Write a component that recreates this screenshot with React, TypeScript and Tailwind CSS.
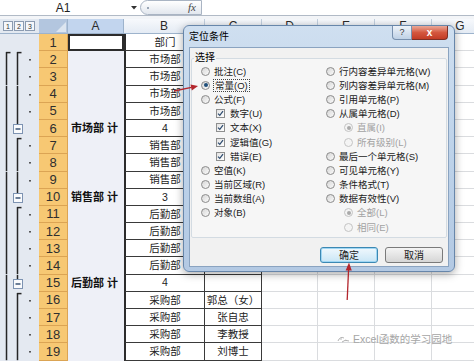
import React from 'react';

type Outline = 'none' | 'dot' | 'minus';

interface SheetRow {
  n: number;
  a?: string;
  b?: string;
  c?: string;
  o: Outline;
  start?: boolean;
}

const rows: SheetRow[] = [
  { n: 1, b: '部门', o: 'none' },
  { n: 2, b: '市场部', o: 'dot', start: true },
  { n: 3, b: '市场部', o: 'dot' },
  { n: 4, b: '市场部', o: 'dot' },
  { n: 5, b: '市场部', o: 'dot' },
  { n: 6, a: '市场部 计', b: '4', o: 'minus' },
  { n: 7, b: '销售部', o: 'dot', start: true },
  { n: 8, b: '销售部', o: 'dot' },
  { n: 9, b: '销售部', o: 'dot' },
  { n: 10, a: '销售部 计', b: '3', o: 'minus' },
  { n: 11, b: '后勤部', o: 'dot', start: true },
  { n: 12, b: '后勤部', o: 'dot' },
  { n: 13, b: '后勤部', o: 'dot' },
  { n: 14, b: '后勤部', o: 'dot' },
  { n: 15, a: '后勤部 计', b: '4', o: 'minus' },
  { n: 16, b: '采购部', c: '郭总（女）', o: 'dot', start: true },
  { n: 17, b: '采购部', c: '张自忠', o: 'dot' },
  { n: 18, b: '采购部', c: '李教授', o: 'dot' },
  { n: 19, b: '采购部', c: '刘博士', o: 'dot' },
];

const cols = [
  { id: 'D', w: 'w-[56px]' },
  { id: 'E', w: 'w-[57px]' },
  { id: 'F', w: 'w-[57px]' },
  { id: 'G', w: 'w-[57px]' },
];

function OutlineMarks({ row }: { row: SheetRow }) {
  if (row.o === 'none') return null;
  const ink = '#262626';
  return (
    <svg width="39" height="17.2" viewBox="0 0 39 17.2" className="block">
      <line x1="6.5" y1={row.n === 2 ? 1 : 0} x2="6.5" y2="17.2" stroke={ink} strokeWidth="1.5" />
      {row.n === 2 && <line x1="6" y1="1.6" x2="10.5" y2="1.6" stroke={ink} strokeWidth="1.5" />}
      {row.o === 'dot' && (
        <>
          <line x1="17.5" y1={row.start ? 1 : 0} x2="17.5" y2="17.2" stroke={ink} strokeWidth="1.5" />
          {row.start && <line x1="17" y1="1.6" x2="21.5" y2="1.6" stroke={ink} strokeWidth="1.5" />}
          <rect x="29.2" y="8" width="1.6" height="1.6" fill="#333" />
        </>
      )}
      {row.o === 'minus' && (
        <>
          <line x1="17.5" y1="0" x2="17.5" y2="4.5" stroke={ink} strokeWidth="1.5" />
          <rect x="13.5" y="4.5" width="9" height="9" fill="#fafbfd" stroke="#7d93b2" />
          <line x1="15.5" y1="9" x2="20.5" y2="9" stroke="#1e3a63" strokeWidth="1.3" />
        </>
      )}
    </svg>
  );
}

function Radio({ on, off }: { on?: boolean; off?: boolean }) {
  return (
    <span
      className={`w-[9px] h-[9px] rounded-full border flex items-center justify-center shrink-0 ${
        off ? 'border-[#c4c4c4] bg-[#f4f4f4]' : 'border-[#8b8b8b] bg-gradient-to-br from-[#d6d6d6] to-[#fbfbfb]'
      }`}
    >
      {on && <span className={`w-[4px] h-[4px] rounded-full ${off ? 'bg-[#a9a9a9]' : 'bg-[#1f4f7a]'}`} />}
    </span>
  );
}

function Check() {
  return (
    <span className="w-[9px] h-[9px] border border-[#8e8f8f] bg-gradient-to-br from-[#e3e3e3] to-white flex items-center justify-center shrink-0">
      <svg width="7" height="7" viewBox="0 0 7 7">
        <path d="M1 3.6 L2.8 5.4 L6 1.2" fill="none" stroke="#2c4a6e" strokeWidth="1.2" />
      </svg>
    </span>
  );
}

interface Opt {
  label: string;
  kind: 'radio' | 'check';
  on?: boolean;
  off?: boolean;
  indent?: boolean;
  focus?: boolean;
}

const leftOpts: Opt[] = [
  { label: '批注(C)', kind: 'radio' },
  { label: '常量(O)', kind: 'radio', on: true, focus: true },
  { label: '公式(F)', kind: 'radio' },
  { label: '数字(U)', kind: 'check', indent: true },
  { label: '文本(X)', kind: 'check', indent: true },
  { label: '逻辑值(G)', kind: 'check', indent: true },
  { label: '错误(E)', kind: 'check', indent: true },
  { label: '空值(K)', kind: 'radio' },
  { label: '当前区域(R)', kind: 'radio' },
  { label: '当前数组(A)', kind: 'radio' },
  { label: '对象(B)', kind: 'radio' },
];

const rightOpts: Opt[] = [
  { label: '行内容差异单元格(W)', kind: 'radio' },
  { label: '列内容差异单元格(M)', kind: 'radio' },
  { label: '引用单元格(P)', kind: 'radio' },
  { label: '从属单元格(D)', kind: 'radio' },
  { label: '直属(I)', kind: 'radio', on: true, off: true, indent: true },
  { label: '所有级别(L)', kind: 'radio', off: true, indent: true },
  { label: '最后一个单元格(S)', kind: 'radio' },
  { label: '可见单元格(Y)', kind: 'radio' },
  { label: '条件格式(T)', kind: 'radio' },
  { label: '数据有效性(V)', kind: 'radio' },
  { label: '全部(L)', kind: 'radio', on: true, off: true, indent: true },
  { label: '相同(E)', kind: 'radio', off: true, indent: true },
];

function OptionRow({ opt, sub }: { opt: Opt; sub: string }) {
  return (
    <div className={`h-[14.2px] flex items-center ${opt.indent ? sub : ''} ${opt.kind === 'check' ? 'gap-[5px]' : 'gap-[4px]'}`}>
      {opt.kind === 'check' ? <Check /> : <Radio on={opt.on} off={opt.off} />}
      <span
        className={`leading-[11px] whitespace-nowrap ${opt.off ? 'text-[#a2a2a2]' : 'text-[#1b1b1b]'} ${
          opt.focus ? 'outline outline-1 outline-dotted outline-[#444] outline-offset-0 px-[1px]' : ''
        }`}
      >
        {opt.label}
      </span>
    </div>
  );
}

function GoToDialog() {
  return (
    <div className="absolute left-[183px] top-[25px] w-[272px] h-[247px] rounded-[6px] border border-[#6786aa] bg-gradient-to-b from-[#cfdff0] via-[#bed3ea] to-[#b3c9e3] shadow-[0_2px_8px_rgba(0,0,0,0.35)] flex flex-col">
      <div className="h-[21px] flex items-start justify-between">
        <span className="pl-[5px] pt-[5px] text-[10px] leading-[11px] text-black">定位条件</span>
        <div className="flex mr-[6px]">
          <span className="w-[20px] h-[14px] rounded-bl-[4px] border border-t-0 border-[#7890ae] bg-gradient-to-b from-[#eef3f9] to-[#bfd1e6] flex items-center justify-center text-[9px] text-[#3a3a3a] font-['Liberation_Sans',sans-serif]">
            ?
          </span>
          <span className="w-[36px] h-[14px] rounded-br-[4px] border border-t-0 border-l-0 border-[#7d2f25] bg-gradient-to-b from-[#e9a898] via-[#d4573f] to-[#c23b25] flex items-center justify-center text-[10px] font-bold text-white font-['Liberation_Sans',sans-serif]">
            x
          </span>
        </div>
      </div>
      <div className="mx-[5px] mb-[4px] flex-1 border border-[#8aa3c0] bg-[#f1f1f1] flex flex-col px-[1px]">
        <fieldset className="mt-[4px] border border-[#d3dbe2] rounded-[2px] bg-[#f6f6f6] pb-[3px]">
          <legend className="ml-[2px] px-[1px] text-[10px] leading-[12px] text-black">选择</legend>
          <div className="grid grid-cols-[134px_1fr] text-[9.5px]">
            <div className="flex flex-col pl-[9px]">
              {leftOpts.map((o) => (
                <OptionRow key={o.label} opt={o} sub="pl-[15px]" />
              ))}
            </div>
            <div className="flex flex-col">
              {rightOpts.map((o) => (
                <OptionRow key={o.label} opt={o} sub="pl-[18px]" />
              ))}
            </div>
          </div>
        </fieldset>
        <div className="mt-auto mb-[3px] flex justify-end gap-[7px] pr-[4px] text-[10px]">
          <span className="w-[58px] h-[16px] rounded-[3px] border border-[#3c88b3] bg-gradient-to-b from-[#f0f8fd] to-[#c9e6f6] shadow-[inset_0_0_0_1px_#9fd6f3] flex items-center justify-center text-[#1b1b1b]">
            确定
          </span>
          <span className="w-[58px] h-[16px] rounded-[3px] border border-[#7a7a7a] bg-gradient-to-b from-[#f4f4f4] to-[#d6d6d6] flex items-center justify-center text-[#1b1b1b]">
            取消
          </span>
        </div>
      </div>
    </div>
  );
}

export default function App() {
  return (
    <div className="w-[474px] h-[361px] relative overflow-hidden bg-white font-['Liberation_Sans','Noto_Sans_CJK_SC',sans-serif]">
      {/* formula bar */}
      <div className="h-[16px] flex border-b border-[#b1bac6] bg-white">
        <div className="w-[126px] flex items-center justify-center text-[12px] leading-none text-[#1f1f1f]">A1</div>
        <div className="w-[14px] flex items-center">
          <svg width="6" height="4" viewBox="0 0 6 4" className="ml-[5px]">
            <path d="M0 0 H6 L3 3.5 Z" fill="#333" />
          </svg>
        </div>
        <div className="w-[62px] h-full rounded-l-[8px] border border-[#a9b4c3] bg-gradient-to-b from-white to-[#e2e7ee] flex items-center justify-between pl-[6px] pr-[5px]">
          <span className="w-[2px] h-[2px] bg-[#9aa6b6]" />
          <span className="italic font-['Liberation_Serif',serif] text-[11px] leading-none text-[#444]">fx</span>
        </div>
        <div className="flex-1" />
      </div>
      <div className="h-[3px] bg-[#f3f5f8]" />

      {/* column headers */}
      <div className="flex h-[15px] border-b border-[#9db3cc] text-[12px] leading-none text-[#2a2a2a]">
        <div className="w-[39px] shrink-0 bg-[#e3e9f1] flex items-center gap-[1px] pl-[3px]">
          {['1', '2', '3'].map((d) => (
            <span
              key={d}
              className="w-[10px] h-[10px] border border-[#8b9bb1] bg-[#f5f7fa] text-[7px] flex items-center justify-center text-[#333]"
            >
              {d}
            </span>
          ))}
        </div>
        <div className="w-[29px] shrink-0 bg-[#b3c6df] border-r border-[#9db3cc] flex items-end justify-end pr-[1px] pb-[1px]">
          <svg width="10" height="10" viewBox="0 0 10 10">
            <path d="M10 0 V10 H0 Z" fill="#dce5f0" />
          </svg>
        </div>
        <div className="w-[56px] shrink-0 bg-[#c2d5ee] border-r border-[#9db3cc] flex items-center justify-center">A</div>
        <div className="w-[81px] shrink-0 bg-gradient-to-b from-[#f7f9fc] to-[#e4ebf4] border-r border-[#c2d0df] flex items-center justify-center">B</div>
        <div className="w-[57px] shrink-0 bg-gradient-to-b from-[#f7f9fc] to-[#e4ebf4] border-r border-[#c2d0df] flex items-center justify-center">C</div>
        {cols.map((c) => (
          <div
            key={c.id}
            className={`${c.w} shrink-0 bg-gradient-to-b from-[#f7f9fc] to-[#e4ebf4] border-r border-[#c2d0df] flex items-center justify-center`}
          >
            {c.id}
          </div>
        ))}
      </div>

      {/* sheet body */}
      <div className="flex flex-col">
        {rows.map((r) => (
          <div key={r.n} className="flex h-[17.2px]">
            <div className="w-[39px] shrink-0 bg-[#e4e9f1]">
              <OutlineMarks row={r} />
            </div>
            <div className="w-[29px] shrink-0 bg-[#f7c873] border-b border-r border-[#dba454] flex items-center justify-center text-[13px] leading-none text-[#2f2f2f]">
              {r.n}
            </div>
            <div
              className={`w-[56px] shrink-0 bg-[#eef0f7] flex items-center pl-[3px] text-[11px] font-bold leading-none text-[#111] whitespace-nowrap ${
                r.n === 1 ? 'border-2 border-[#2c2c2c] bg-white' : ''
              }`}
            >
              {r.a}
            </div>
            <div className="w-[81px] shrink-0 bg-white border-l-2 border-l-[#2c2c2c] border-r border-b border-[#3a3a3a] flex items-center justify-center text-[10.5px] leading-none text-[#222]">
              {r.b}
            </div>
            <div className="w-[57px] shrink-0 bg-white border-r border-b border-[#3a3a3a] flex items-center justify-center text-[10.5px] leading-none text-[#222]">
              {r.c}
            </div>
            {cols.map((c) => (
              <div key={c.id} className={`${c.w} shrink-0 bg-white border-r border-b border-[#dadcdf]`} />
            ))}
          </div>
        ))}
      </div>

      <GoToDialog />

      {/* red arrows */}
      <svg className="absolute left-[170px] top-[80px]" width="32" height="16" viewBox="0 0 32 16">
        <line x1="4" y1="11" x2="21.5" y2="7.4" stroke="#b3262d" strokeWidth="1.4" />
        <path d="M28 6 L21.8 10.4 L20.5 4.5 Z" fill="#b3262d" />
      </svg>
      <svg className="absolute left-[340px] top-[258px]" width="16" height="46" viewBox="0 0 16 46">
        <line x1="7.2" y1="42" x2="8.6" y2="11" stroke="#b3262d" strokeWidth="1.3" />
        <path d="M9 4.5 L5.6 12.5 L11.8 12.5 Z" fill="#b3262d" />
      </svg>

      {/* watermark */}
      <div className="absolute left-[336px] top-[333px] flex items-center gap-[2px] text-[10.5px] leading-none text-[#a6a6a6]">
        <svg width="15" height="12" viewBox="0 0 15 12">
          <path d="M2 8 Q4 3 8 5 M6 9 Q9 6 13 8" fill="none" stroke="#b2b2b2" strokeWidth="1" />
          <circle cx="5" cy="6" r="0.8" fill="#b2b2b2" />
          <circle cx="10" cy="7.5" r="0.8" fill="#b2b2b2" />
        </svg>
        <span>Excel函数的学习园地</span>
      </div>
    </div>
  );
}
